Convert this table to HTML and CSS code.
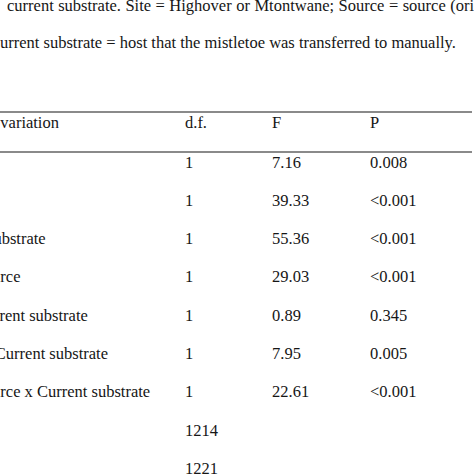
FILE: index.html
```html
<!DOCTYPE html>
<html>
<head>
<meta charset="utf-8">
<link rel="stylesheet" href="styles.css">
</head>
<body>
<div class="page">
  <div class="caption">
    <div class="cap-line cap-first">current substrate. Site = Highover or Mtontwane; Source = source (original host) of the mistletoe;</div>
    <div class="cap-line cap-second">Current substrate = host that the mistletoe was transferred to manually.</div>
  </div>
  <div class="table">
    <div class="row head">
      <div class="c-label">Source of variation</div>
      <div class="c-df">d.f.</div>
      <div class="c-f">F</div>
      <div class="c-p">P</div>
    </div>
    <div class="row">
      <div class="c-label">Site</div><div class="c-df">1</div><div class="c-f">7.16</div><div class="c-p">0.008</div>
    </div>
    <div class="row">
      <div class="c-label">Source</div><div class="c-df">1</div><div class="c-f">39.33</div><div class="c-p">&lt;0.001</div>
    </div>
    <div class="row">
      <div class="c-label">Current substrate</div><div class="c-df">1</div><div class="c-f">55.36</div><div class="c-p">&lt;0.001</div>
    </div>
    <div class="row">
      <div class="c-label">Site x Source</div><div class="c-df">1</div><div class="c-f">29.03</div><div class="c-p">&lt;0.001</div>
    </div>
    <div class="row">
      <div class="c-label">Site x Current substrate</div><div class="c-df">1</div><div class="c-f">0.89</div><div class="c-p">0.345</div>
    </div>
    <div class="row">
      <div class="c-label">Source x Current substrate</div><div class="c-df">1</div><div class="c-f">7.95</div><div class="c-p">0.005</div>
    </div>
    <div class="row">
      <div class="c-label">Site x Source x Current substrate</div><div class="c-df">1</div><div class="c-f">22.61</div><div class="c-p">&lt;0.001</div>
    </div>
    <div class="row">
      <div class="c-label">Error</div><div class="c-df">1214</div><div class="c-f"></div><div class="c-p"></div>
    </div>
    <div class="row">
      <div class="c-label">Total</div><div class="c-df">1221</div><div class="c-f"></div><div class="c-p"></div>
    </div>
  </div>
</div>
</body>
</html>
```
FILE: styles.css
```css
html, body {
  margin: 0;
  padding: 0;
  background: #ffffff;
}
.page {
  width: 474px;
  height: 474px;
  overflow: hidden;
  font-family: "Times New Roman", "Liberation Serif", Tinos, "DejaVu Serif", serif;
  font-size: 16.5px;
  color: #161616;
}
.caption {
  margin-top: -13px;
}
.cap-line {
  line-height: 37px;
  white-space: nowrap;
}
.cap-first {
  padding-left: 7px;
  word-spacing: 0.35px;
}
.cap-second {
  margin-left: -11px;
}
.table {
  margin-top: 50px;
  width: 472px;
  border-top: 2px solid #8a8a8a;
}
.row {
  display: flex;
  height: 38.33px;
  line-height: 20px;
  white-space: nowrap;
}
.row.head {
  height: 37.5px;
  border-bottom: 2px solid #8a8a8a;
}
.c-label {
  width: 252.5px;
  margin-left: -67.5px;
  flex: none;
}
.c-df {
  width: 87px;
  flex: none;
}
.c-f {
  width: 98px;
  flex: none;
}
.c-p {
  flex: none;
}
```
